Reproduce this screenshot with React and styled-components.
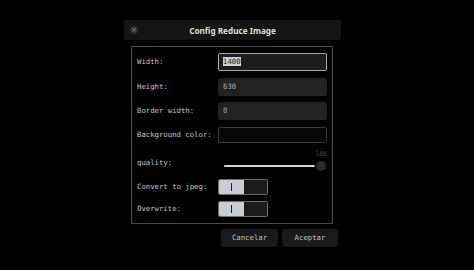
import styled, { createGlobalStyle } from 'styled-components';

const Global = createGlobalStyle`
    html, body {
        margin: 0;
        padding: 0;
        background: #000;
        width: 474px;
        height: 270px;
        overflow: hidden;
    }
`;

const ROWS = [
    { label: 'Width:', kind: 'input', value: '1400', focused: true, h: 25 },
    { label: 'Height:', kind: 'input', value: '630', h: 24 },
    { label: 'Border width:', kind: 'input', value: '0', h: 25 },
    { label: 'Background color:', kind: 'color', h: 21 },
    { label: 'quality:', kind: 'slider', value: 100, h: 31 },
    { label: 'Convert to jpeg:', kind: 'toggle', h: 22 },
    { label: 'Overwrite:', kind: 'toggle', h: 16 },
];

function Field({ kind, value, focused }) {
    if (kind === 'input') {
        return (
            <Input $focused={focused}>
                {focused ? <Selected>{value}</Selected> : value}
            </Input>
        );
    }
    if (kind === 'color') return <ColorInput />;
    if (kind === 'slider') {
        return (
            <Slider>
                <SliderValue>{value}</SliderValue>
                <Track />
                <Thumb />
            </Slider>
        );
    }
    return (
        <Toggle>
            <ToggleOn>
                <Bar />
            </ToggleOn>
            <ToggleOff />
        </Toggle>
    );
}

function App() {
    return (
        <Page>
            <Global />
            <Dialog>
                <Header>
                    <Close>×</Close>
                    <Title>Config Reduce Image</Title>
                </Header>
                <Frame>
                    {ROWS.map(row => (
                        <Row key={row.label} $h={row.h} $kind={row.kind}>
                            <Label $kind={row.kind}>{row.label}</Label>
                            <Field {...row} />
                        </Row>
                    ))}
                </Frame>
                <Actions>
                    <Button $w={57}>Cancelar</Button>
                    <Button $w={56}>Aceptar</Button>
                </Actions>
            </Dialog>
        </Page>
    );
}

const Page = styled.div`
    padding: 20px 0 0 124px;
    font-family: 'DejaVu Sans Mono', monospace;
`;

const Dialog = styled.div`
    width: 217px;
    display: flex;
    flex-direction: column;
`;

const Header = styled.div`
    position: relative;
    height: 20px;
    background: #151515;
    border-radius: 3px;
    display: flex;
    align-items: center;
    justify-content: center;
`;

const Close = styled.span`
    position: absolute;
    left: 6px;
    top: 6px;
    width: 8px;
    height: 8px;
    border-radius: 50%;
    background: #2e2e2e;
    color: #9a9a9a;
    font-family: 'DejaVu Sans', sans-serif;
    font-size: 7px;
    line-height: 8px;
    text-align: center;
`;

const Title = styled.span`
    font-family: 'Noto Sans', sans-serif;
    font-weight: 700;
    font-size: 8.2px;
    color: #dcdcdc;
`;

const Frame = styled.div`
    margin: 6px 8px 0 7px;
    border: 1px solid #4a4a4a;
    padding: 6px 5px 6px 5px;
    display: flex;
    flex-direction: column;
`;

const Row = styled.div`
    height: ${p => p.$h}px;
    display: flex;
    align-items: ${p => (p.$kind === 'slider' ? 'stretch' : 'flex-start')};
`;

const Label = styled.div`
    width: 81px;
    flex: none;
    color: #c8c8c8;
    font-size: 7.3px;
    line-height: ${p => (p.$kind === 'toggle' ? 16 : p.$kind === 'color' ? 16 : 18)}px;
    padding-top: ${p => (p.$kind === 'slider' ? 6 : 0)}px;
    white-space: nowrap;
`;

const Input = styled.div`
    width: 109px;
    height: 18px;
    box-sizing: border-box;
    background: ${p => (p.$focused ? '#1c1c1c' : '#232323')};
    border: 1px solid ${p => (p.$focused ? '#a8a8a8' : '#232323')};
    border-radius: 2px;
    color: #a8a8a8;
    font-size: 7.3px;
    line-height: 16px;
    padding-left: 4px;
`;

const Selected = styled.span`
    background: #c9d0da;
    color: #1a1a1a;
`;

const ColorInput = styled.div`
    width: 109px;
    height: 16px;
    box-sizing: border-box;
    background: #070707;
    border: 1px solid #3a3a3a;
    border-radius: 2px;
`;

const Slider = styled.div`
    position: relative;
    width: 109px;
`;

const SliderValue = styled.span`
    position: absolute;
    right: 0;
    top: 2px;
    color: #4a4a4a;
    font-size: 6.5px;
`;

const Track = styled.div`
    position: absolute;
    left: 6px;
    top: 17px;
    width: 91px;
    height: 2px;
    background: #d0d4d8;
    border-radius: 1px;
`;

const Thumb = styled.div`
    position: absolute;
    left: 98px;
    top: 13px;
    width: 10px;
    height: 10px;
    border-radius: 50%;
    background: #2c2c2c;
`;

const Toggle = styled.div`
    width: 50px;
    height: 16px;
    box-sizing: border-box;
    border: 1px solid #6e6e6e;
    border-radius: 2px;
    display: flex;
    overflow: hidden;
`;

const ToggleOn = styled.div`
    width: 25px;
    background: #c8cdd5;
    display: flex;
    align-items: center;
    justify-content: center;
`;

const Bar = styled.div`
    width: 1px;
    height: 8px;
    background: #222;
`;

const ToggleOff = styled.div`
    flex: 1;
    background: #1c1c1c;
`;

const Actions = styled.div`
    display: flex;
    justify-content: flex-end;
    gap: 4px;
    margin: 5px 3px 0 0;
`;

const Button = styled.div`
    width: ${p => p.$w}px;
    height: 18px;
    background: #1a1a1a;
    border-radius: 2px;
    color: #c0c0c0;
    font-size: 7.3px;
    line-height: 18px;
    text-align: center;
`;

export default App;
